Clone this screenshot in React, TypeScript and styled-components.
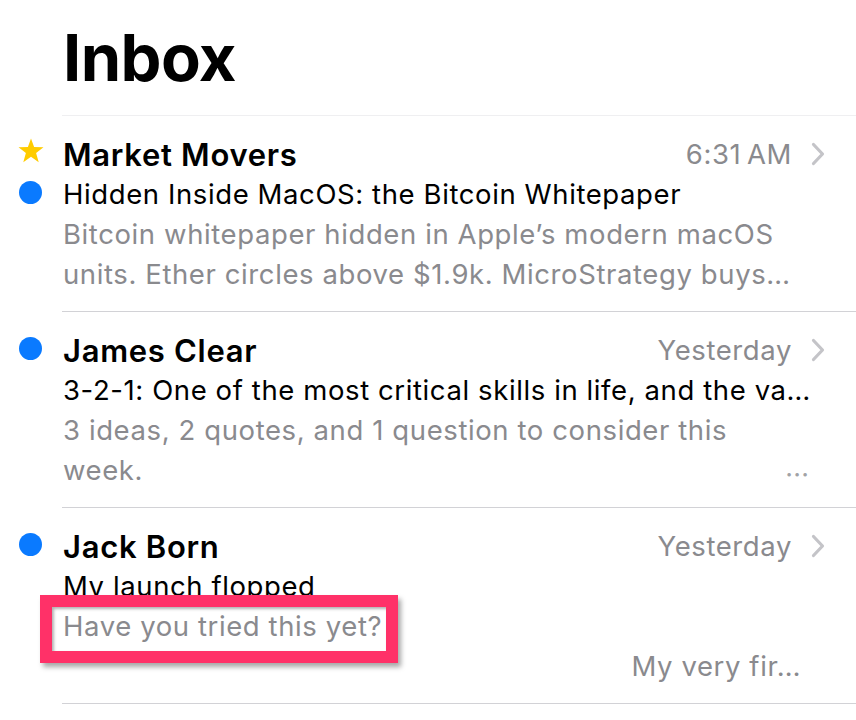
import React from 'react';
import styled, { createGlobalStyle } from 'styled-components';

const GlobalStyle = createGlobalStyle`
    html, body {
        margin: 0;
        padding: 0;
        background: #ffffff;
    }
    body {
        font-family: Inter, "Noto Sans", "Liberation Sans", sans-serif;
        -webkit-font-smoothing: antialiased;
    }
`;

const colors = {
    text: '#000000',
    gray: '#8a8a8e',
    chevron: '#c4c4c8',
    blue: '#0a7aff',
    yellow: '#ffcc00',
    pink: '#ff3168',
    divider: '#d2d2d6',
    headerDivider: '#efeff1',
};

const Page = styled.div`
    width: 856px;
    height: 720px;
    overflow: hidden;
    background: #fff;
`;

const Header = styled.header`
    margin-left: 62px;
    padding: 19px 0 18px 1px;
    border-bottom: 1px solid ${colors.headerDivider};
`;

const Title = styled.h1`
    margin: 0;
    font-size: 65px;
    line-height: 78px;
    font-weight: 700;
    letter-spacing: -0.6px;
    color: ${colors.text};
`;

const Row = styled.div`
    position: relative;
    display: flex;
`;

const Gutter = styled.div`
    width: 62px;
    flex-shrink: 0;
    padding-top: 18px;
    display: flex;
    flex-direction: column;
`;

const Marker = styled.div<{ $lift?: number }>`
    height: 40px;
    display: flex;
    align-items: center;
    justify-content: center;
    padding-right: 1px;
    transform: translateY(${p => -(p.$lift ?? 2)}px);
`;

const Dot = styled.span`
    width: 23px;
    height: 23px;
    border-radius: 50%;
    background: ${colors.blue};
`;

const Content = styled.div`
    flex: 1;
    min-width: 0;
    padding: 18px 31px 17px 1px;
    border-bottom: 1px solid ${colors.divider};
`;

const TopLine = styled.div`
    height: 40px;
    display: flex;
    align-items: center;
    justify-content: space-between;
`;

const Sender = styled.span`
    font-size: 31px;
    font-weight: 600;
    letter-spacing: 0.7px;
    color: ${colors.text};
`;

const Meta = styled.span`
    display: flex;
    align-items: center;
    gap: 19px;
`;

const Time = styled.span`
    font-size: 27.5px;
    color: ${colors.gray};
    letter-spacing: 0.6px;
`;

const Line = styled.div<{ $muted?: boolean; $align?: 'left' | 'right'; $inset?: number }>`
    height: 40px;
    line-height: 40px;
    font-size: 27.5px;
    white-space: nowrap;
    overflow: hidden;
    letter-spacing: 0.6px;
    color: ${p => (p.$muted ? colors.gray : colors.text)};
    text-align: ${p => p.$align ?? 'left'};
    padding-right: ${p => p.$inset ?? 0}px;
`;

const SplitLine = styled(Line)`
    display: flex;
    justify-content: space-between;
    align-items: center;
`;

const MoreDots = styled.span`
    font-size: 11px;
    letter-spacing: 1.8px;
    color: #a2a2a6;
    padding-right: 15px;
    transform: translateY(4px);
`;

const Highlight = styled.div`
    position: absolute;
    left: 40px;
    top: 87px;
    width: 358px;
    height: 68px;
    box-sizing: border-box;
    border: 12px solid ${colors.pink};
    box-shadow: 3px 4px 5px rgba(0, 0, 0, 0.35), inset 2px 2px 3px rgba(0, 0, 0, 0.3);
    pointer-events: none;
`;

const Chevron = () => (
    <svg width="14" height="24" viewBox="0 0 14 24">
        <path d="M2.5 2.5 L11.5 12 L2.5 21.5" fill="none" stroke={colors.chevron} strokeWidth="3.2" strokeLinecap="round" strokeLinejoin="round" />
    </svg>
);

const Star = () => (
    <svg width="26" height="25" viewBox="0 0 26 25">
        <path d="M13 0.5 L16.1 9 L25.5 9.3 L18.1 15 L20.7 24.2 L13 18.8 L5.3 24.2 L7.9 15 L0.5 9.3 L9.9 9 Z" fill={colors.yellow} />
    </svg>
);

type Message = {
    sender: string;
    time: string;
    subject: string;
    starred?: boolean;
    preview: React.ReactNode;
    annotated?: boolean;
};

const messages: Message[] = [
    {
        sender: 'Market Movers',
        time: '6:31\u2009AM',
        subject: 'Hidden Inside MacOS: the Bitcoin Whitepaper',
        starred: true,
        preview: (
            <>
                <Line $muted>Bitcoin whitepaper hidden in Apple’s modern macOS</Line>
                <Line $muted>units. Ether circles above $1.9k. MicroStrategy buys…</Line>
            </>
        ),
    },
    {
        sender: 'James Clear',
        time: 'Yesterday',
        subject: '3-2-1: One of the most critical skills in life, and the va…',
        preview: (
            <>
                <Line $muted>3 ideas, 2 quotes, and 1 question to consider this</Line>
                <SplitLine $muted>
                    <span>week.</span>
                    <MoreDots>•••</MoreDots>
                </SplitLine>
            </>
        ),
    },
    {
        sender: 'Jack Born',
        time: 'Yesterday',
        subject: 'My launch flopped',
        annotated: true,
        preview: (
            <>
                <Line $muted>Have you tried this yet?</Line>
                <Line $muted $align="right" $inset={24}>My very fir…</Line>
            </>
        ),
    },
];

function MessageRow({ message }: { message: Message }) {
    return (
        <Row>
            <Gutter>
                {message.starred ? (
                    <>
                        <Marker $lift={4}><Star /></Marker>
                        <Marker><Dot /></Marker>
                    </>
                ) : (
                    <Marker><Dot /></Marker>
                )}
            </Gutter>
            <Content>
                <TopLine>
                    <Sender>{message.sender}</Sender>
                    <Meta>
                        <Time>{message.time}</Time>
                        <Chevron />
                    </Meta>
                </TopLine>
                <Line>{message.subject}</Line>
                {message.preview}
            </Content>
            {message.annotated && <Highlight />}
        </Row>
    );
}

export default function App() {
    return (
        <Page>
            <GlobalStyle />
            <Header>
                <Title>Inbox</Title>
            </Header>
            {messages.map(m => (
                <MessageRow key={m.sender} message={m} />
            ))}
        </Page>
    );
}
